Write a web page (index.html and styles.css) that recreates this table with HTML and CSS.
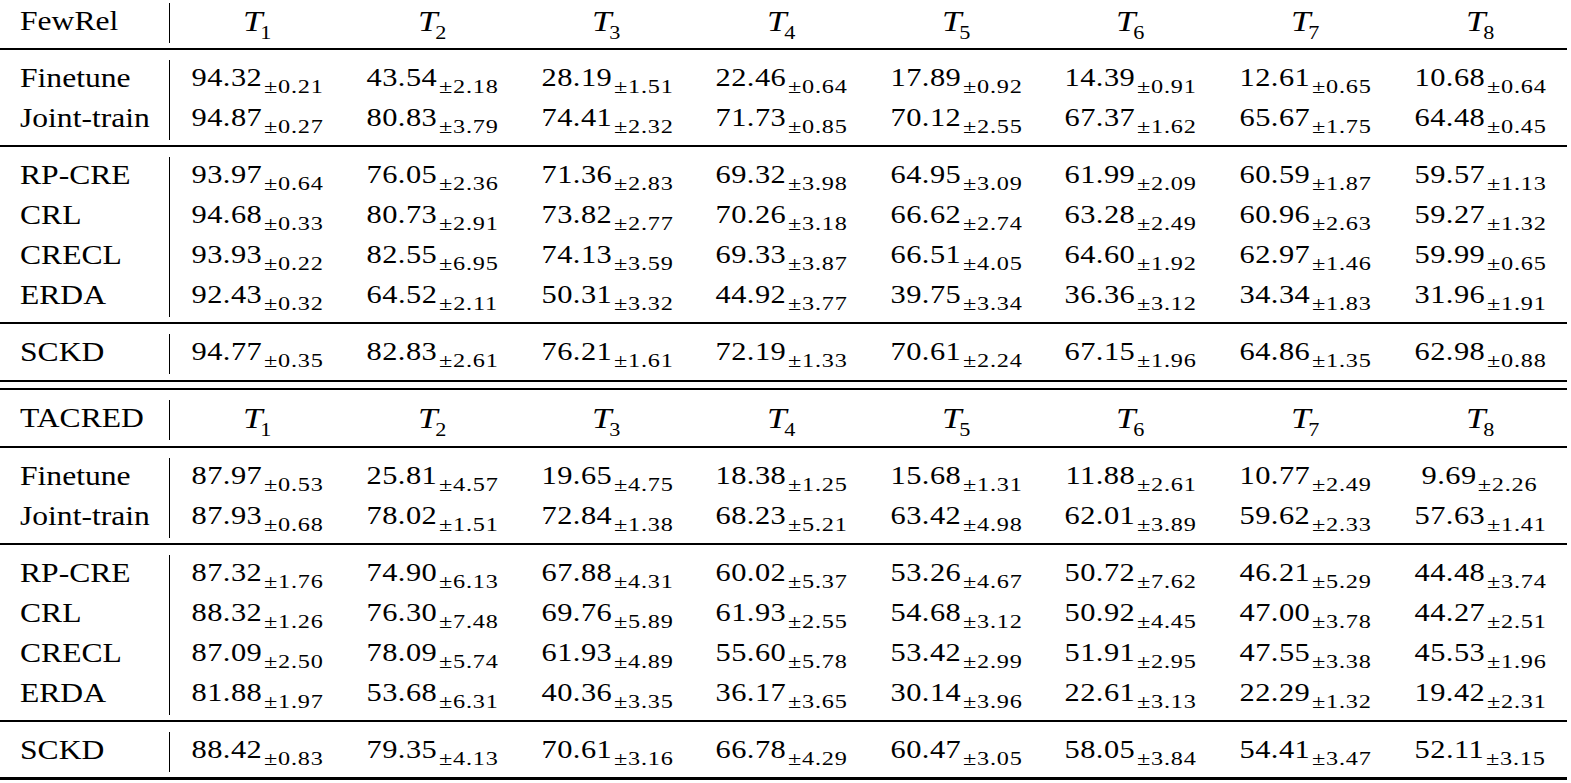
FILE: index.html
```html
<!DOCTYPE html>
<html>
<head>
<meta charset="utf-8">
<link rel="stylesheet" href="styles.css">
</head>
<body>
<div class="tbl">
  <div class="row head">
    <div class="lab"><span>FewRel</span></div>
    <div class="c"><span class="t">T<sub>1</sub></span></div>
    <div class="c"><span class="t">T<sub>2</sub></span></div>
    <div class="c"><span class="t">T<sub>3</sub></span></div>
    <div class="c"><span class="t">T<sub>4</sub></span></div>
    <div class="c"><span class="t">T<sub>5</sub></span></div>
    <div class="c"><span class="t">T<sub>6</sub></span></div>
    <div class="c"><span class="t">T<sub>7</sub></span></div>
    <div class="c"><span class="t">T<sub>8</sub></span></div>
  </div>
  <div class="rule"></div>
  <div class="row">
    <div class="lab"><span>Finetune</span></div>
    <div class="c"><span class="v">94.32<sub>±0.21</sub></span></div>
    <div class="c"><span class="v">43.54<sub>±2.18</sub></span></div>
    <div class="c"><span class="v">28.19<sub>±1.51</sub></span></div>
    <div class="c"><span class="v">22.46<sub>±0.64</sub></span></div>
    <div class="c"><span class="v">17.89<sub>±0.92</sub></span></div>
    <div class="c"><span class="v">14.39<sub>±0.91</sub></span></div>
    <div class="c"><span class="v">12.61<sub>±0.65</sub></span></div>
    <div class="c"><span class="v">10.68<sub>±0.64</sub></span></div>
  </div>
  <div class="row">
    <div class="lab"><span>Joint-train</span></div>
    <div class="c"><span class="v">94.87<sub>±0.27</sub></span></div>
    <div class="c"><span class="v">80.83<sub>±3.79</sub></span></div>
    <div class="c"><span class="v">74.41<sub>±2.32</sub></span></div>
    <div class="c"><span class="v">71.73<sub>±0.85</sub></span></div>
    <div class="c"><span class="v">70.12<sub>±2.55</sub></span></div>
    <div class="c"><span class="v">67.37<sub>±1.62</sub></span></div>
    <div class="c"><span class="v">65.67<sub>±1.75</sub></span></div>
    <div class="c"><span class="v">64.48<sub>±0.45</sub></span></div>
  </div>
  <div class="rule"></div>
  <div class="row">
    <div class="lab"><span>RP-CRE</span></div>
    <div class="c"><span class="v">93.97<sub>±0.64</sub></span></div>
    <div class="c"><span class="v">76.05<sub>±2.36</sub></span></div>
    <div class="c"><span class="v">71.36<sub>±2.83</sub></span></div>
    <div class="c"><span class="v">69.32<sub>±3.98</sub></span></div>
    <div class="c"><span class="v">64.95<sub>±3.09</sub></span></div>
    <div class="c"><span class="v">61.99<sub>±2.09</sub></span></div>
    <div class="c"><span class="v">60.59<sub>±1.87</sub></span></div>
    <div class="c"><span class="v">59.57<sub>±1.13</sub></span></div>
  </div>
  <div class="row">
    <div class="lab"><span>CRL</span></div>
    <div class="c"><span class="v">94.68<sub>±0.33</sub></span></div>
    <div class="c"><span class="v">80.73<sub>±2.91</sub></span></div>
    <div class="c"><span class="v">73.82<sub>±2.77</sub></span></div>
    <div class="c"><span class="v">70.26<sub>±3.18</sub></span></div>
    <div class="c"><span class="v">66.62<sub>±2.74</sub></span></div>
    <div class="c"><span class="v">63.28<sub>±2.49</sub></span></div>
    <div class="c"><span class="v">60.96<sub>±2.63</sub></span></div>
    <div class="c"><span class="v">59.27<sub>±1.32</sub></span></div>
  </div>
  <div class="row">
    <div class="lab"><span>CRECL</span></div>
    <div class="c"><span class="v">93.93<sub>±0.22</sub></span></div>
    <div class="c"><span class="v">82.55<sub>±6.95</sub></span></div>
    <div class="c"><span class="v">74.13<sub>±3.59</sub></span></div>
    <div class="c"><span class="v">69.33<sub>±3.87</sub></span></div>
    <div class="c"><span class="v">66.51<sub>±4.05</sub></span></div>
    <div class="c"><span class="v">64.60<sub>±1.92</sub></span></div>
    <div class="c"><span class="v">62.97<sub>±1.46</sub></span></div>
    <div class="c"><span class="v">59.99<sub>±0.65</sub></span></div>
  </div>
  <div class="row">
    <div class="lab"><span>ERDA</span></div>
    <div class="c"><span class="v">92.43<sub>±0.32</sub></span></div>
    <div class="c"><span class="v">64.52<sub>±2.11</sub></span></div>
    <div class="c"><span class="v">50.31<sub>±3.32</sub></span></div>
    <div class="c"><span class="v">44.92<sub>±3.77</sub></span></div>
    <div class="c"><span class="v">39.75<sub>±3.34</sub></span></div>
    <div class="c"><span class="v">36.36<sub>±3.12</sub></span></div>
    <div class="c"><span class="v">34.34<sub>±1.83</sub></span></div>
    <div class="c"><span class="v">31.96<sub>±1.91</sub></span></div>
  </div>
  <div class="rule"></div>
  <div class="row">
    <div class="lab"><span>SCKD</span></div>
    <div class="c"><span class="v">94.77<sub>±0.35</sub></span></div>
    <div class="c"><span class="v">82.83<sub>±2.61</sub></span></div>
    <div class="c"><span class="v">76.21<sub>±1.61</sub></span></div>
    <div class="c"><span class="v">72.19<sub>±1.33</sub></span></div>
    <div class="c"><span class="v">70.61<sub>±2.24</sub></span></div>
    <div class="c"><span class="v">67.15<sub>±1.96</sub></span></div>
    <div class="c"><span class="v">64.86<sub>±1.35</sub></span></div>
    <div class="c"><span class="v">62.98<sub>±0.88</sub></span></div>
  </div>
  <div class="rule dbl"></div>
  <div class="rule"></div>
  <div class="row head">
    <div class="lab"><span>TACRED</span></div>
    <div class="c"><span class="t">T<sub>1</sub></span></div>
    <div class="c"><span class="t">T<sub>2</sub></span></div>
    <div class="c"><span class="t">T<sub>3</sub></span></div>
    <div class="c"><span class="t">T<sub>4</sub></span></div>
    <div class="c"><span class="t">T<sub>5</sub></span></div>
    <div class="c"><span class="t">T<sub>6</sub></span></div>
    <div class="c"><span class="t">T<sub>7</sub></span></div>
    <div class="c"><span class="t">T<sub>8</sub></span></div>
  </div>
  <div class="rule after-head"></div>
  <div class="row">
    <div class="lab"><span>Finetune</span></div>
    <div class="c"><span class="v">87.97<sub>±0.53</sub></span></div>
    <div class="c"><span class="v">25.81<sub>±4.57</sub></span></div>
    <div class="c"><span class="v">19.65<sub>±4.75</sub></span></div>
    <div class="c"><span class="v">18.38<sub>±1.25</sub></span></div>
    <div class="c"><span class="v">15.68<sub>±1.31</sub></span></div>
    <div class="c"><span class="v">11.88<sub>±2.61</sub></span></div>
    <div class="c"><span class="v">10.77<sub>±2.49</sub></span></div>
    <div class="c"><span class="v">9.69<sub>±2.26</sub></span></div>
  </div>
  <div class="row">
    <div class="lab"><span>Joint-train</span></div>
    <div class="c"><span class="v">87.93<sub>±0.68</sub></span></div>
    <div class="c"><span class="v">78.02<sub>±1.51</sub></span></div>
    <div class="c"><span class="v">72.84<sub>±1.38</sub></span></div>
    <div class="c"><span class="v">68.23<sub>±5.21</sub></span></div>
    <div class="c"><span class="v">63.42<sub>±4.98</sub></span></div>
    <div class="c"><span class="v">62.01<sub>±3.89</sub></span></div>
    <div class="c"><span class="v">59.62<sub>±2.33</sub></span></div>
    <div class="c"><span class="v">57.63<sub>±1.41</sub></span></div>
  </div>
  <div class="rule"></div>
  <div class="row">
    <div class="lab"><span>RP-CRE</span></div>
    <div class="c"><span class="v">87.32<sub>±1.76</sub></span></div>
    <div class="c"><span class="v">74.90<sub>±6.13</sub></span></div>
    <div class="c"><span class="v">67.88<sub>±4.31</sub></span></div>
    <div class="c"><span class="v">60.02<sub>±5.37</sub></span></div>
    <div class="c"><span class="v">53.26<sub>±4.67</sub></span></div>
    <div class="c"><span class="v">50.72<sub>±7.62</sub></span></div>
    <div class="c"><span class="v">46.21<sub>±5.29</sub></span></div>
    <div class="c"><span class="v">44.48<sub>±3.74</sub></span></div>
  </div>
  <div class="row">
    <div class="lab"><span>CRL</span></div>
    <div class="c"><span class="v">88.32<sub>±1.26</sub></span></div>
    <div class="c"><span class="v">76.30<sub>±7.48</sub></span></div>
    <div class="c"><span class="v">69.76<sub>±5.89</sub></span></div>
    <div class="c"><span class="v">61.93<sub>±2.55</sub></span></div>
    <div class="c"><span class="v">54.68<sub>±3.12</sub></span></div>
    <div class="c"><span class="v">50.92<sub>±4.45</sub></span></div>
    <div class="c"><span class="v">47.00<sub>±3.78</sub></span></div>
    <div class="c"><span class="v">44.27<sub>±2.51</sub></span></div>
  </div>
  <div class="row">
    <div class="lab"><span>CRECL</span></div>
    <div class="c"><span class="v">87.09<sub>±2.50</sub></span></div>
    <div class="c"><span class="v">78.09<sub>±5.74</sub></span></div>
    <div class="c"><span class="v">61.93<sub>±4.89</sub></span></div>
    <div class="c"><span class="v">55.60<sub>±5.78</sub></span></div>
    <div class="c"><span class="v">53.42<sub>±2.99</sub></span></div>
    <div class="c"><span class="v">51.91<sub>±2.95</sub></span></div>
    <div class="c"><span class="v">47.55<sub>±3.38</sub></span></div>
    <div class="c"><span class="v">45.53<sub>±1.96</sub></span></div>
  </div>
  <div class="row">
    <div class="lab"><span>ERDA</span></div>
    <div class="c"><span class="v">81.88<sub>±1.97</sub></span></div>
    <div class="c"><span class="v">53.68<sub>±6.31</sub></span></div>
    <div class="c"><span class="v">40.36<sub>±3.35</sub></span></div>
    <div class="c"><span class="v">36.17<sub>±3.65</sub></span></div>
    <div class="c"><span class="v">30.14<sub>±3.96</sub></span></div>
    <div class="c"><span class="v">22.61<sub>±3.13</sub></span></div>
    <div class="c"><span class="v">22.29<sub>±1.32</sub></span></div>
    <div class="c"><span class="v">19.42<sub>±2.31</sub></span></div>
  </div>
  <div class="rule"></div>
  <div class="row">
    <div class="lab"><span>SCKD</span></div>
    <div class="c"><span class="v">88.42<sub>±0.83</sub></span></div>
    <div class="c"><span class="v">79.35<sub>±4.13</sub></span></div>
    <div class="c"><span class="v">70.61<sub>±3.16</sub></span></div>
    <div class="c"><span class="v">66.78<sub>±4.29</sub></span></div>
    <div class="c"><span class="v">60.47<sub>±3.05</sub></span></div>
    <div class="c"><span class="v">58.05<sub>±3.84</sub></span></div>
    <div class="c"><span class="v">54.41<sub>±3.47</sub></span></div>
    <div class="c"><span class="v">52.11<sub>±3.15</sub></span></div>
  </div>
  <div class="rule bottom"></div>
</div>
</body>
</html>
```

FILE: styles.css
```css
html, body {
  margin: 0;
  padding: 0;
  background: #fff;
}

body {
  color: #000;
  font-family: "Liberation Serif", "Times New Roman", serif;
}

.tbl {
  width: 1567px;
  padding-top: 3px;
}

.row {
  display: grid;
  grid-template-columns: 170px repeat(8, 1fr);
  height: 40px;
  line-height: 36px;
}

.row.head {
  line-height: 36px;
}

.lab {
  border-right: 1px solid #000;
  padding-left: 20px;
  font-size: 27px;
  white-space: nowrap;
}

.lab span {
  display: inline-block;
  transform: scaleX(1.17);
  transform-origin: left center;
}

.c {
  text-align: center;
  font-size: 26px;
  white-space: nowrap;
}

.v {
  display: inline-block;
  letter-spacing: 0.4px;
  transform: scaleX(1.17);
}

.v sub {
  display: inline-block;
  font-size: 18.5px;
  letter-spacing: 0.6px;
  line-height: 0;
  vertical-align: -7px;
  margin-left: 1px;
  margin-right: 5px;
  transform: scaleX(1.12);
  transform-origin: left center;
}

.t {
  display: inline-block;
  font-style: italic;
  font-size: 30px;
  transform: scaleX(1.17);
}

.t sub {
  font-style: normal;
  font-size: 19px;
  line-height: 0;
  vertical-align: -8px;
  margin-left: -2px;
}

.rule {
  height: 2px;
  background: #000;
  margin: 5px 0 10px;
}

.rule.dbl {
  margin-top: 6px;
  margin-bottom: 6px;
}

.rule.after-head {
  margin-top: 6px;
}

.rule.bottom {
  height: 3px;
  margin-bottom: 0;
}
```
